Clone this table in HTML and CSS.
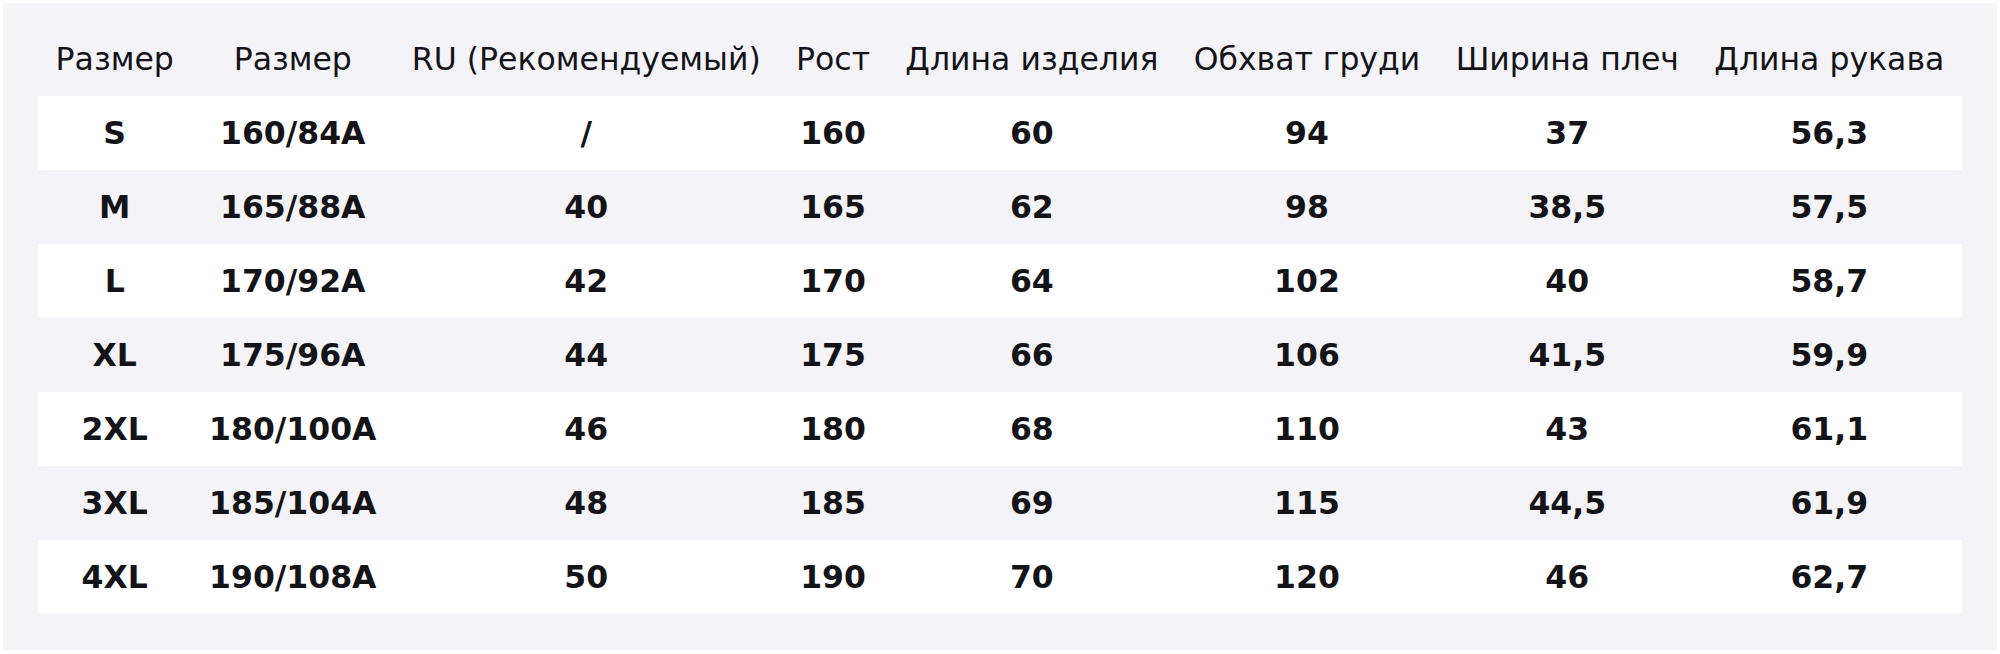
FILE: index.html
```html
<!DOCTYPE html>
<html lang="ru">
<head>
<meta charset="utf-8">
<link rel="stylesheet" href="styles.css">
</head>
<body>
<div class="panel">
  <table class="sizes">
    <thead>
      <tr>
        <th>Размер</th>
        <th>Размер</th>
        <th>RU (Рекомендуемый)</th>
        <th>Рост</th>
        <th>Длина изделия</th>
        <th>Обхват груди</th>
        <th>Ширина плеч</th>
        <th>Длина рукава</th>
      </tr>
    </thead>
    <tbody>
      <tr><td>S</td><td>160/84A</td><td>/</td><td>160</td><td>60</td><td>94</td><td>37</td><td>56,3</td></tr>
      <tr><td>M</td><td>165/88A</td><td>40</td><td>165</td><td>62</td><td>98</td><td>38,5</td><td>57,5</td></tr>
      <tr><td>L</td><td>170/92A</td><td>42</td><td>170</td><td>64</td><td>102</td><td>40</td><td>58,7</td></tr>
      <tr><td>XL</td><td>175/96A</td><td>44</td><td>175</td><td>66</td><td>106</td><td>41,5</td><td>59,9</td></tr>
      <tr><td>2XL</td><td>180/100A</td><td>46</td><td>180</td><td>68</td><td>110</td><td>43</td><td>61,1</td></tr>
      <tr><td>3XL</td><td>185/104A</td><td>48</td><td>185</td><td>69</td><td>115</td><td>44,5</td><td>61,9</td></tr>
      <tr><td>4XL</td><td>190/108A</td><td>50</td><td>190</td><td>70</td><td>120</td><td>46</td><td>62,7</td></tr>
    </tbody>
  </table>
</div>
</body>
</html>
```

FILE: styles.css
```css
html, body {
  margin: 0;
  padding: 0;
  background: #ffffff;
}

body {
  padding: 3px;
  font-family: "DejaVu Sans", Verdana, sans-serif;
  color: #131318;
}

.panel {
  background: #f4f4f8;
  padding: 19px 35px 36px;
}

.sizes {
  width: 100%;
  border-collapse: collapse;
  border-spacing: 0;
}

.sizes th,
.sizes td {
  height: 74px;
  padding: 0 17.5px;
  text-align: center;
  vertical-align: middle;
  font-size: 31.5px;
  white-space: nowrap;
}

.sizes th {
  font-weight: normal;
}

.sizes td {
  font-weight: bold;
}

.sizes tbody tr:nth-child(odd) {
  background: #ffffff;
}
```
